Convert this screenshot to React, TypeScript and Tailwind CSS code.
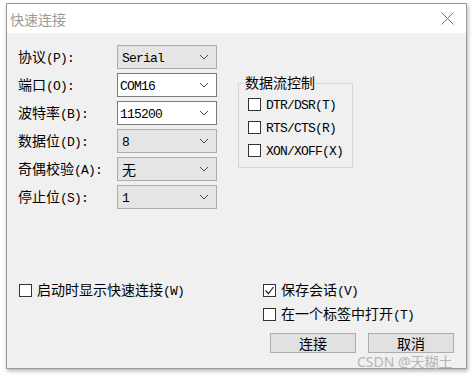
import React from "react";

const mono = "[font-family:'Liberation_Mono',monospace] text-[13px] tracking-[-0.8px]";

function T({ s }: { s: string }) {
  const parts = s.split(/([\x20-\x7e]+)/).filter(Boolean);
  return (
    <>
      {parts.map((p, i) =>
        /^[\x20-\x7e]+$/.test(p) ? (
          <span key={i} className={mono}>
            {p}
          </span>
        ) : (
          <span key={i}>{p}</span>
        )
      )}
    </>
  );
}

function Chevron() {
  return (
    <svg width="10" height="6" viewBox="0 0 10 6">
      <polyline points="1,1 5,5 9,1" fill="none" stroke="#4a4a4a" strokeWidth="1" />
    </svg>
  );
}

function Combo({ value, editable }: { value: string; editable?: boolean }) {
  return (
    <div
      className={
        editable
          ? "h-[24px] flex items-center justify-between pl-[2px] pr-[7px] border bg-white border-[#7a7a7a]"
          : "h-[24px] flex items-center justify-between pl-[4px] pr-[7px] border bg-[#e5e5e5] border-[#adadad]"
      }
    >
      <span className="leading-none">
        <T s={value} />
      </span>
      <Chevron />
    </div>
  );
}

function Check({ checked }: { checked?: boolean }) {
  return (
    <div className="w-[13px] h-[13px] border border-[#333] bg-white flex items-center justify-center shrink-0">
      {checked && (
        <svg width="11" height="11" viewBox="0 0 11 11">
          <polyline points="1.5,5.5 4.5,8.5 9.5,2" fill="none" stroke="#222" strokeWidth="1.2" />
        </svg>
      )}
    </div>
  );
}

function CheckRow({ label, checked }: { label: string; checked?: boolean }) {
  return (
    <div className="h-[14px] flex items-center gap-[5px]">
      <Check checked={checked} />
      <span className="leading-none whitespace-nowrap">
        <T s={label} />
      </span>
    </div>
  );
}

const rows: { label: string; value: string; editable?: boolean }[] = [
  { label: "协议(P):", value: "Serial" },
  { label: "端口(O):", value: "COM16", editable: true },
  { label: "波特率(B):", value: "115200", editable: true },
  { label: "数据位(D):", value: "8" },
  { label: "奇偶校验(A):", value: "无" },
  { label: "停止位(S):", value: "1" },
];

export default function App() {
  return (
    <div className="relative w-[474px] h-[376px] bg-white pt-[3px] pl-[6px] [font-family:'Noto_Sans_CJK_SC',sans-serif] text-[14px] text-black overflow-hidden">
      <div className="w-[461px] h-[366px] border border-[#9b9b9b] shadow-[1px_2px_4px_rgba(0,0,0,0.3)] flex flex-col">
        <div className="h-[29px] bg-white flex items-center justify-between pl-[3px] pr-[12px]">
          <span className="text-[14px] text-[#9a9a9a] leading-none">快速连接</span>
          <svg width="13" height="13" viewBox="0 0 13 13">
            <line x1="0.5" y1="0.5" x2="12.5" y2="12.5" stroke="#777" strokeWidth="1" />
            <line x1="12.5" y1="0.5" x2="0.5" y2="12.5" stroke="#777" strokeWidth="1" />
          </svg>
        </div>
        <div className="flex-1 bg-[#f0f0f0] pl-[11px] pt-[12px]">
          <div className="flex items-start">
            <div className="grid grid-cols-[99px_100px] gap-y-[4px] auto-rows-[24px] items-center">
              {rows.map((r) => (
                <React.Fragment key={r.label}>
                  <span className="leading-none whitespace-nowrap">
                    <T s={r.label} />
                  </span>
                  <Combo value={r.value} editable={r.editable} />
                </React.Fragment>
              ))}
            </div>
            <div className="relative ml-[21px] mt-[38px] w-[115px] h-[85px] border border-[#d5d5d5] pt-[13px] pl-[9px] flex flex-col gap-[9px]">
              <span className="absolute -top-[11px] left-[5px] px-[1px] bg-[#f0f0f0] leading-[18px]">数据流控制</span>
              <CheckRow label="DTR/DSR(T)" />
              <CheckRow label="RTS/CTS(R)" />
              <CheckRow label="XON/XOFF(X)" />
            </div>
          </div>
          <div className="flex mt-[74px]">
            <div className="w-[245px] pl-[1px]">
              <CheckRow label="启动时显示快速连接(W)" />
            </div>
            <div className="flex flex-col">
              <CheckRow label="保存会话(V)" checked />
              <div className="mt-[10px]">
                <CheckRow label="在一个标签中打开(T)" />
              </div>
              <div className="flex gap-[12px] ml-[7px] mt-[12px]">
                <div className="w-[86px] h-[20px] bg-[#e1e1e1] border border-[#adadad] flex items-center justify-center leading-none">
                  连接
                </div>
                <div className="w-[86px] h-[20px] bg-[#e1e1e1] border border-[#adadad] flex items-center justify-center leading-none">
                  取消
                </div>
              </div>
            </div>
          </div>
        </div>
      </div>
      <span className="absolute left-[357px] top-[354px] text-[14px] leading-[15px] text-[#b5b5b5] [font-family:'Noto_Sans','Noto_Sans_CJK_SC',sans-serif]">
        CSDN @天糊土
      </span>
    </div>
  );
}
